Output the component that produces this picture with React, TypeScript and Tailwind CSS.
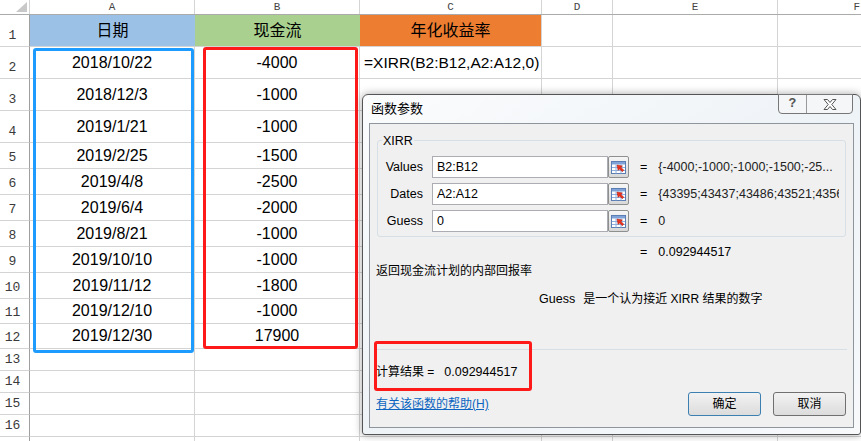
import React from 'react'

const rows = [
  { n: 1, h: 'h-[32px]' },
  { n: 2, h: 'h-[32px]', a: '2018/10/22', b: '-4000', c: '=XIRR(B2:B12,A2:A12,0)' },
  { n: 3, h: 'h-[32px]', a: '2018/12/3', b: '-1000' },
  { n: 4, h: 'h-[32px]', a: '2019/1/21', b: '-1000' },
  { n: 5, h: 'h-[26px]', a: '2019/2/25', b: '-1500' },
  { n: 6, h: 'h-[26px]', a: '2019/4/8', b: '-2500' },
  { n: 7, h: 'h-[26px]', a: '2019/6/4', b: '-2000' },
  { n: 8, h: 'h-[26px]', a: '2019/8/21', b: '-1000' },
  { n: 9, h: 'h-[26px]', a: '2019/10/10', b: '-1000' },
  { n: 10, h: 'h-[26px]', a: '2019/11/12', b: '-1800' },
  { n: 11, h: 'h-[25px]', a: '2019/12/10', b: '-1000' },
  { n: 12, h: 'h-[25px]', a: '2019/12/30', b: '17900' },
  { n: 13, h: 'h-[22px]' },
  { n: 14, h: 'h-[22px]' },
  { n: 15, h: 'h-[22px]' },
  { n: 16, h: 'h-[22px]' },
  { n: 17, h: 'h-[22px]', hide: true },
]

const cell = 'border-r border-b border-[#d4d4d4] flex items-center justify-center text-[16px] text-black'

function RefIcon() {
  return (
    <div className="w-[21px] h-[22px] flex items-center justify-center border border-[#8e8f8f] rounded-[2px] bg-gradient-to-b from-[#f6f6f6] to-[#d8d8d8]">
      <svg width="15" height="13" viewBox="0 0 15 13">
        <rect x="0.5" y="0.5" width="14" height="12" fill="#fff" stroke="#5b7fb5" />
        <rect x="1" y="1" width="13" height="2.5" fill="#7fa3d8" />
        <path d="M1 6.5H14M1 9.5H14M5 3.5V12.5M10 3.5V12.5" stroke="#8fb0de" strokeWidth="1" />
        <path d="M6 4 L11.5 5 L10 6.4 L12.8 9.2 L11.3 10.7 L8.5 7.9 L7.1 9.4 Z" fill="#e8321e" stroke="#a8150a" strokeWidth="0.5" />
      </svg>
    </div>
  )
}

function ArgRow({ label, value, result }: { label: string; value: string; result: string }) {
  return (
    <div className="flex items-center h-[22px]">
      <div className="w-[45px] text-right text-[12.5px]">{label}</div>
      <div className="ml-[9px] w-[176px] h-[22px] border border-[#abadb3] bg-white pl-[4px] flex items-center text-[12.5px]">
        {value}
      </div>
      <RefIcon />
      <div className="ml-[11px] text-[12.5px]">=</div>
      <div className="ml-[11px] mr-[6px] flex-1 overflow-hidden whitespace-nowrap text-[12.5px] text-[#222]">{result}</div>
    </div>
  )
}

function Dialog() {
  return (
    <div className="absolute left-[362px] top-[94px] w-[499px] border border-[#555] rounded-t-[6px] rounded-b-[3px] bg-gradient-to-br from-[#fbfcfd] via-[#eef3f7] to-[#f7f9fb] shadow-[0_0_8px_rgba(0,0,0,0.35)] pb-[6px]">
      <div className="relative h-[28px] pl-[8px] flex items-center text-[13px] text-black">
        函数参数
        <div className="absolute left-[415px] top-[-1px] w-[75px] h-[20px] border border-[#777] rounded-b-[4px] flex bg-[#f4f6f8]">
          <div className="w-[28px] border-r border-[#999] flex items-center justify-center text-[13px] font-bold text-[#555] font-['Liberation_Mono',monospace]">?</div>
          <div className="flex-1 flex items-center justify-center">
            <svg width="14" height="11" viewBox="0 0 14 11">
              <path d="M1 0.5H4.5L7 3.5L9.5 0.5H13L8.8 5.5L13 10.5H9.5L7 7.5L4.5 10.5H1L5.2 5.5Z" fill="#fff" stroke="#555" strokeWidth="1" />
            </svg>
          </div>
        </div>
      </div>
      <div className="mx-[6px] border border-[#8f959c] bg-[#f0f0f0] pb-[11px] text-black">
        <div className="relative mt-[16px] mx-[7px] border border-[#d5dfe5] rounded-[3px] pt-[15px] pb-[4px] flex flex-col gap-[5px]">
          <div className="absolute left-[4px] top-[-9px] px-[1px] bg-[#f0f0f0] text-[12.5px]">XIRR</div>
          <ArgRow label="Values" value="B2:B12" result="{-4000;-1000;-1000;-1500;-25..." />
          <ArgRow label="Dates" value="A2:A12" result="{43395;43437;43486;43521;43564;43620" />
          <ArgRow label="Guess" value="0" result="0" />
        </div>
        <div className="mt-[7px] h-[16px] pl-[270px] flex items-center text-[12.5px]">
          <span>=</span>
          <span className="ml-[11px]">0.092944517</span>
        </div>
        <div className="mt-[3px] h-[16px] pl-[6px] flex items-center text-[12px]">返回现金流计划的内部回报率</div>
        <div className="mt-[12px] h-[16px] pl-[169px] flex items-center text-[12px]">
          <span className="text-[12.5px]">Guess</span>
          <span className="ml-[8px]">是一个认为接近 XIRR 结果的数字</span>
        </div>
        <div className="mt-[42px] mx-[6px] border-t border-[#d5dfe5]" />
        <div className="mt-[14px] h-[16px] pl-[6px] flex items-center text-[12.5px]">
          <span className="text-[12px]">计算结果 =</span>
          <span className="ml-[10px]">0.092944517</span>
        </div>
        <div className="mt-[12px] h-[24px] pl-[6px] pr-[7px] flex items-center">
          <span className="text-[12px] text-[#0b65c0] underline">有关该函数的帮助(H)</span>
          <div className="flex-1" />
          <div className="w-[73px] h-[24px] border border-[#3c7fb1] rounded-[3px] bg-gradient-to-b from-[#f2f2f2] to-[#dcdcdc] flex items-center justify-center text-[12px]">确定</div>
          <div className="ml-[12px] w-[73px] h-[24px] border border-[#707070] rounded-[3px] bg-gradient-to-b from-[#f2f2f2] to-[#dcdcdc] flex items-center justify-center text-[12px]">取消</div>
        </div>
      </div>
    </div>
  )
}

export default function App() {
  return (
    <div className="relative w-[861px] h-[441px] overflow-hidden bg-white font-['Liberation_Sans','Noto_Sans_CJK_SC',sans-serif]">
      {/* column headers */}
      <div className="flex h-[15px] border-b border-[#ababab] text-[11px] text-[#444] font-['Liberation_Mono',monospace]">
        <div className="relative w-[30px] border-r border-[#d4d4d4]">
          <svg className="absolute left-[16px] top-[2px]" width="11" height="10" viewBox="0 0 11 10">
            <path d="M11 0V10H0Z" fill="#c8c8c8" />
          </svg>
        </div>
        <div className="w-[165px] border-r border-[#d4d4d4] flex items-center justify-center">A</div>
        <div className="w-[165px] border-r border-[#d4d4d4] flex items-center justify-center">B</div>
        <div className="w-[182px] border-r border-[#d4d4d4] flex items-center justify-center">C</div>
        <div className="w-[71px] border-r border-[#d4d4d4] flex items-center justify-center">D</div>
        <div className="w-[165px] border-r border-[#d4d4d4] flex items-center justify-center">E</div>
        <div className="flex-1 flex items-center justify-end pr-[1px]">F</div>
      </div>

      {rows.map((r) => (
        <div key={r.n} className={`flex ${r.h}`}>
          <div className="w-[30px] border-r border-r-[#9e9e9e] border-b border-b-[#d4d4d4] flex items-end justify-center pb-[1px] pr-[4px] text-[13px] text-[#3a3a3a] font-['Liberation_Mono',monospace]">
            {r.hide ? '' : r.n}
          </div>
          {r.n === 1 ? (
            <>
              <div className="w-[165px] bg-[#9bc2e6] border-b border-[#d4d4d4] flex items-center justify-center text-[16px]">日期</div>
              <div className="w-[165px] bg-[#a9d08e] border-b border-[#d4d4d4] flex items-center justify-center text-[16px]">现金流</div>
              <div className="w-[182px] bg-[#ed7d31] border-r border-b border-[#d4d4d4] flex items-center justify-center text-[16px]">年化收益率</div>
            </>
          ) : (
            <>
              <div className={`w-[165px] ${cell}`}>{r.a}</div>
              <div className={`w-[165px] ${cell}`}>{r.b}</div>
              <div className={`w-[182px] ${cell} !justify-start pl-[4px] whitespace-nowrap`}>
                <span className="text-[15.5px]">{r.c}</span>
              </div>
            </>
          )}
          <div className="w-[71px] border-r border-b border-[#d4d4d4]" />
          <div className="w-[165px] border-r border-b border-[#d4d4d4]" />
          <div className="flex-1 border-b border-[#d4d4d4]" />
        </div>
      ))}

      {/* selection highlights */}
      <div className="absolute left-[33px] top-[48px] w-[161px] h-[305px] border-[3px] border-[#1e9bff] rounded-[3px]" />
      <div className="absolute left-[203px] top-[47px] w-[155px] h-[302px] border-[3px] border-[#ff1a1a] rounded-[3px]" />

      <Dialog />

      <div className="absolute left-[374px] top-[341px] w-[158px] h-[50px] border-[3px] border-[#ff1a1a] rounded-[3px]" />
    </div>
  )
}
